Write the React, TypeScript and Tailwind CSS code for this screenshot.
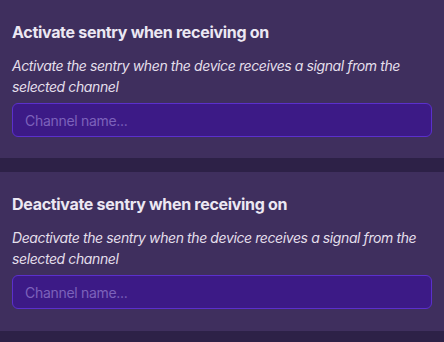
import React from "react";

function Section({ title, desc, h }: { title: string; desc: string; h: string }) {
  return (
    <div className={`bg-[#3f2f5e] px-[12px] pt-[20px] ${h}`}>
      <div className="text-[16px] leading-[24px] font-bold text-[#ece8f3] tracking-[-0.3px]">{title}</div>
      <div className="mt-[11px] text-[14px] leading-[21px] italic text-[#e4dfeb] tracking-[-0.4px]">{desc}</div>
      <div className="mt-[6px] h-[34px] rounded-[6px] border border-[#5b30cc] bg-[#3c1a86] flex items-center px-[12px]">
        <input
          className="bg-transparent outline-none w-full text-[14px] tracking-[-0.3px] text-white placeholder:text-[#7c62bb]"
          placeholder="Channel name..."
        />
      </div>
    </div>
  );
}

export default function App() {
  return (
    <div className="w-[444px] h-[342px] overflow-hidden bg-[#2d2147]" style={{ fontFamily: "Inter, 'Noto Sans', sans-serif" }}>
      <Section
        h="h-[158px]"
        title="Activate sentry when receiving on"
        desc="Activate the sentry when the device receives a signal from the selected channel"
      />
      <div className="h-[14px]" />
      <Section
        h="h-[159px]"
        title="Deactivate sentry when receiving on"
        desc="Deactivate the sentry when the device receives a signal from the selected channel"
      />
    </div>
  );
}
